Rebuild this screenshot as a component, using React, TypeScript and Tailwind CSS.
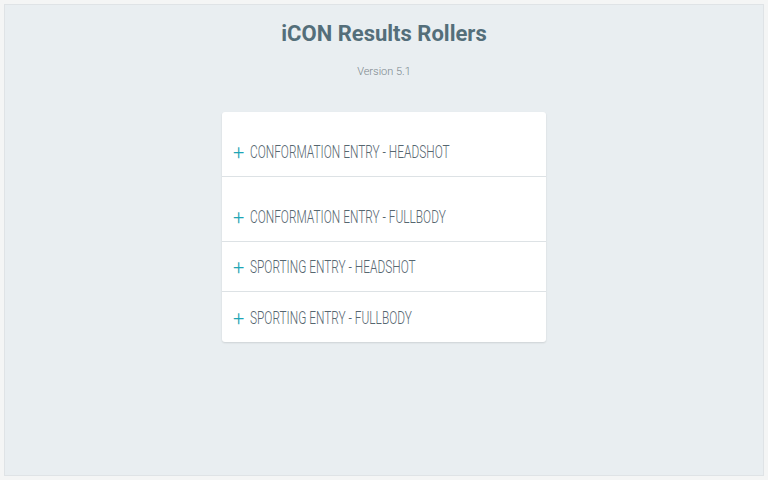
import React from "react";

const items = [
  { label: "CONFORMATION ENTRY - HEADSHOT", extra: true },
  { label: "CONFORMATION ENTRY - FULLBODY", extra: true },
  { label: "SPORTING ENTRY - HEADSHOT", extra: false },
  { label: "SPORTING ENTRY - FULLBODY", extra: false },
];

export default function App() {
  return (
    <div className="w-[768px] h-[480px] bg-[#f4f5f5] p-[4px]">
      <div
        className="h-full border border-[#dfe3e6] bg-[#e9eef1] flex flex-col items-center"
        style={{ fontFamily: "Roboto, 'Liberation Sans', sans-serif" }}
      >
        <h1 className="mt-[15px] text-[22px] leading-[28px] font-bold text-[#546e7a]">
          iCON Results Rollers
        </h1>
        <p className="mt-[17px] text-[11px] leading-[14px] font-light text-[#7b868c]">Version 5.1</p>
        <div className="mt-[33px] w-[324px] bg-white rounded-[3px] shadow-[0_1px_2px_rgba(0,0,0,0.12)]">
          {items.map((it, i) => (
            <div
              key={it.label}
              className={`flex items-center h-[50px] pl-[11px] pt-[1px] ${it.extra ? "mt-[15px]" : ""} ${
                i < items.length - 1 ? "border-b border-[#dde2e5]" : ""
              }`}
            >
              <span className="shrink-0 text-[#1ea5b5] text-[20px] leading-none font-light w-[17px]">+</span>
              <span className="inline-block origin-left scale-x-[0.625] whitespace-nowrap text-[#56666f] text-[19px] font-light leading-[20px]">
                {it.label}
              </span>
            </div>
          ))}
        </div>
      </div>
    </div>
  );
}
